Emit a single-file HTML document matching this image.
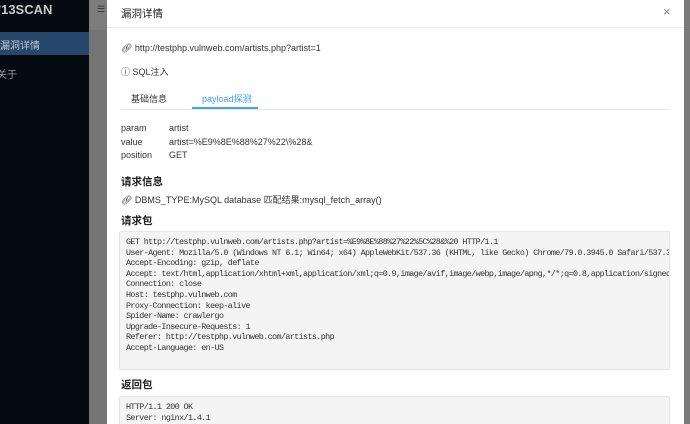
<!DOCTYPE html>
<html><head><style>
*{margin:0;padding:0;box-sizing:border-box}
html,body{width:690px;height:424px;overflow:hidden}
body{position:relative;background:#777;font-family:"Liberation Sans","Noto Sans CJK SC",sans-serif;}
.side{position:absolute;left:0;top:0;width:89px;height:424px;background:#060b12;color:#bbb}
.logo{position:absolute;left:-2px;top:2px;font-size:13px;font-weight:bold;color:#c8c8c8}
.act{position:absolute;left:0;top:32px;width:89px;height:23px;background:#27466b;color:#c0c8d0;font-size:10px;padding:5px 0 0 0}
.about{position:absolute;left:-3px;top:66px;font-size:10px;color:#999}
.hdr{position:absolute;left:89px;top:0;width:18px;height:30px;background:#7c7c7c}
.mid{position:absolute;left:89px;top:30px;width:18px;height:394px;background:#747474}
.dr{position:absolute;left:107px;top:0;width:577px;height:424px;background:#fff;color:#333;overflow:hidden}
.rs{position:absolute;left:684px;top:0;width:6px;height:424px;background:#7a7a7a}
.t{position:absolute;font-size:9px;white-space:nowrap}
.h{position:absolute;font-size:10.5px;font-weight:bold;color:#222}
pre{position:absolute;left:12px;width:551px;background:#f4f4f4;border:1px solid #e6e6e6;border-radius:2px;font-family:"Liberation Mono",monospace;font-size:8.4px;letter-spacing:-0.6px;line-height:10.6px;color:#333;padding:5px 6px;overflow:hidden;white-space:pre}
</style></head><body>
<div class="side"><div class="logo">'13SCAN</div><div class="act">漏洞详情</div><div class="about">关于</div></div>
<div class="hdr"><span style="position:absolute;left:8px;top:4px;font-size:9px;color:#333">☰</span></div>
<div class="mid"></div>
<div class="dr">
<div class="t" style="left:14px;top:6px;font-size:10.5px;color:#222">漏洞详情</div>
<div class="t" style="left:556px;top:4px;font-size:13px;color:#888">×</div>
<div style="position:absolute;left:0;top:27px;width:577px;height:1px;background:#eee"></div>
<div class="t" style="left:14px;top:43px">🔗︎ http://testphp.vulnweb.com/artists.php?artist=1</div>
<div class="t" style="left:14px;top:65px">ⓘ SQL注入</div>
<div class="t" style="left:24px;top:92px">基础信息</div>
<div class="t" style="left:95px;top:92px;color:#409eff">payload探测</div>
<div style="position:absolute;left:14px;top:109px;width:549px;height:1px;background:#e4e7ed"></div>
<div style="position:absolute;left:85px;top:107px;width:66px;height:2px;background:#409eff"></div>
<div class="t" style="left:14px;top:122px;line-height:13.5px">param<br>value<br>position</div>
<div class="t" style="left:62px;top:122px;line-height:13.5px">artist<br>artist=%E9%8E%88%27%22\%28&amp;<br>GET</div>
<div class="h" style="left:14px;top:174px">请求信息</div>
<div class="t" style="left:14px;top:193px">🔗︎ DBMS_TYPE:MySQL database 匹配结果:mysql_fetch_array()</div>
<div class="h" style="left:14px;top:213px">请求包</div>
<pre style="top:231px;height:139px">GET http://testphp.vulnweb.com/artists.php?artist=%E9%8E%88%27%22%5C%28&amp;%20 HTTP/1.1
User-Agent: Mozilla/5.0 (Windows NT 6.1; Win64; x64) AppleWebKit/537.36 (KHTML, like Gecko) Chrome/79.0.3945.0 Safari/537.36
Accept-Encoding: gzip, deflate
Accept: text/html,application/xhtml+xml,application/xml;q=0.9,image/avif,image/webp,image/apng,*/*;q=0.8,application/signed
Connection: close
Host: testphp.vulnweb.com
Proxy-Connection: keep-alive
Spider-Name: crawlergo
Upgrade-Insecure-Requests: 1
Referer: http://testphp.vulnweb.com/artists.php
Accept-Language: en-US</pre>
<div class="h" style="left:14px;top:377px">返回包</div>
<pre style="top:396px;height:40px">HTTP/1.1 200 OK
Server: nginx/1.4.1</pre>
</div>
<div class="rs"></div>
</body></html>
